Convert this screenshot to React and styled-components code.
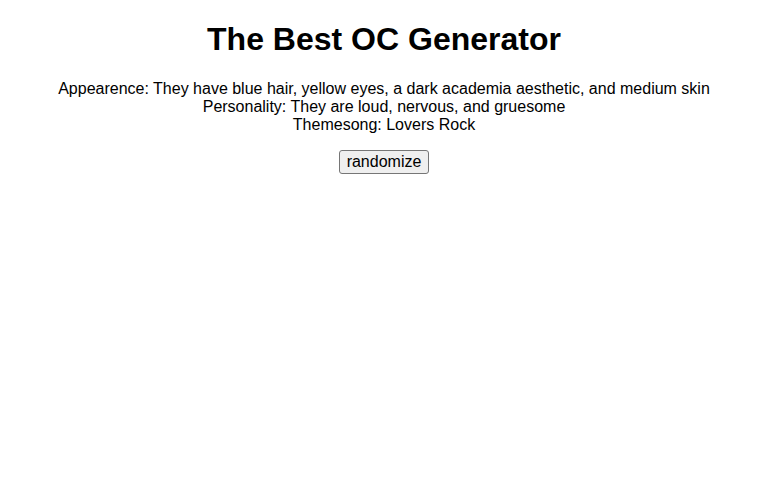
import React, { useState } from "react";
import styled, { createGlobalStyle } from "styled-components";

const Global = createGlobalStyle`
  html, body { margin: 0; padding: 0; background: #fff; }
  body { font-family: "Liberation Sans", Arial, sans-serif; color: #000; }
`;

const Page = styled.main`
  display: flex;
  flex-direction: column;
  align-items: center;
  text-align: center;
`;

const Title = styled.h1`
  font-size: 32px;
  font-weight: bold;
  margin: 21px 0 22px;
  line-height: 37px;
`;

const Lines = styled.div`
  font-size: 16px;
  line-height: 18px;
`;

const Line = styled.div``;

const Button = styled.button`
  margin-top: 16px;
  font-family: "Liberation Sans", Arial, sans-serif;
  font-size: 16px;
  line-height: 18px;
  color: #000;
  background: #efefef;
  border: 1px solid #767676;
  border-radius: 3px;
  padding: 2px 7px;
  cursor: pointer;
`;

export default function App() {
  const [oc] = useState({
    look: "They have blue hair, yellow eyes, a dark academia aesthetic, and medium skin",
    personality: "They are loud, nervous, and gruesome",
    song: "Lovers Rock",
  });
  return (
    <>
      <Global />
      <Page>
        <Title>The Best OC Generator</Title>
        <Lines>
          <Line>Appearence: {oc.look}</Line>
          <Line>Personality: {oc.personality}</Line>
          <Line>Themesong: {oc.song}</Line>
        </Lines>
        <Button>randomize</Button>
      </Page>
    </>
  );
}
